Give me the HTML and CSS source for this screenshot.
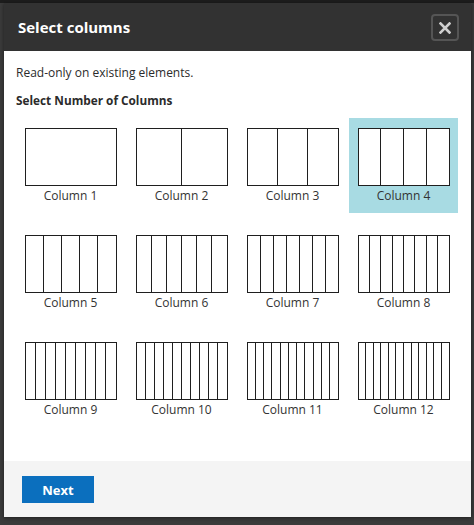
FILE: index.html
```html
<!DOCTYPE html>
<html>
<head>
<meta charset="utf-8">
<link rel="stylesheet" href="styles.css">
</head>
<body>
<div class="backdrop-top"></div>
<div class="dialog">
  <div class="header">
    <h1 class="title">Select columns</h1>
    <button class="close" aria-label="Close">
      <svg width="12" height="12" viewBox="0 0 12 12"><path d="M1.5 1.5 L10.5 10.5 M10.5 1.5 L1.5 10.5" stroke="#cfcfcf" stroke-width="2.6" stroke-linecap="square"/></svg>
    </button>
  </div>
  <div class="body">
    <p class="note">Read-only on existing elements.</p>
    <p class="label">Select Number of Columns</p>
    <div class="grid" id="grid"></div>
  </div>
  <div class="footer">
    <button class="next">Next</button>
  </div>
</div>
<script>
  var grid = document.getElementById('grid');
  for (var n = 1; n <= 12; n++) {
    var cell = document.createElement('div');
    cell.className = 'cell' + (n === 4 ? ' selected' : '');
    var box = document.createElement('div');
    box.className = 'box';
    for (var i = 0; i < n; i++) {
      var c = document.createElement('div');
      c.className = 'col';
      box.appendChild(c);
    }
    var cap = document.createElement('div');
    cap.className = 'caption';
    cap.textContent = 'Column ' + n;
    cell.appendChild(box);
    cell.appendChild(cap);
    grid.appendChild(cell);
  }
</script>
</body>
</html>
```

FILE: styles.css
```css
html, body {
  margin: 0;
  padding: 0;
}
body {
  background: #3b3b3b;
  width: 474px;
  height: 525px;
  overflow: hidden;
  font-family: "Open Sans", "Liberation Sans", sans-serif;
}
.backdrop-top {
  height: 3px;
  background: #1d1d1d;
}
.dialog {
  margin-left: 4px;
  width: 467px;
  height: 514px;
  display: flex;
  flex-direction: column;
  box-shadow: 0 1px 4px rgba(0,0,0,0.5);
}
.header {
  height: 48px;
  background: #323232;
  display: flex;
  align-items: center;
  justify-content: space-between;
  padding: 0 12px 0 14px;
}
.title {
  margin: 0;
  color: #fff;
  font-size: 15px;
  font-weight: 700;
  line-height: 20px;
  margin-top: -1px;
}
.close {
  width: 28px;
  height: 27px;
  box-sizing: border-box;
  border: 2px solid #555;
  border-radius: 4px;
  background: transparent;
  display: flex;
  align-items: center;
  justify-content: center;
  padding: 0;
  margin-top: 1px;
}
.body {
  flex: 1;
  background: #fff;
  padding: 13px 12px 0 12px;
}
.note {
  margin: 0;
  font-size: 12px;
  line-height: 18px;
  color: #2b2b2b;
}
.label {
  margin: 9px 0 0 0;
  font-size: 11.8px;
  font-weight: 700;
  line-height: 18px;
  color: #2b2b2b;
}
.grid {
  margin-top: 9px;
  display: grid;
  grid-template-columns: repeat(4, 109px);
  grid-auto-rows: 95px;
  column-gap: 2px;
  row-gap: 12px;
}
.cell {
  box-sizing: border-box;
  padding-top: 10px;
  display: flex;
  flex-direction: column;
  align-items: center;
}
.cell.selected {
  background: #a8dbe3;
}
.box {
  width: 92px;
  height: 58px;
  box-sizing: border-box;
  border: 1px solid #1f1f1f;
  display: flex;
  background: #fff;
}
.col {
  flex: 1;
  border-left: 1px solid #1f1f1f;
}
.col:first-child {
  border-left: none;
}
.caption {
  margin-top: 2px;
  font-size: 12px;
  line-height: 16px;
  color: #333;
}
.footer {
  height: 56px;
  background: #f4f4f4;
  padding: 15px 18px 0 18px;
  box-sizing: border-box;
}
.next {
  width: 72px;
  height: 27px;
  border: none;
  background: #0b6fbe;
  color: #fff;
  font-family: "Open Sans", "Liberation Sans", sans-serif;
  font-weight: 700;
  font-size: 13px;
  padding: 0;
}
```
